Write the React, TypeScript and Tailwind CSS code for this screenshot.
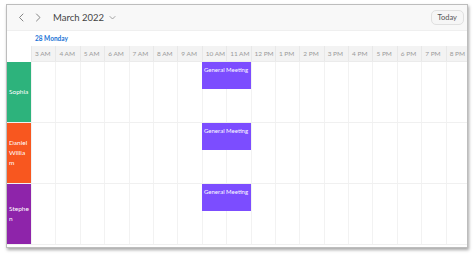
const HOURS = ['3 AM', '4 AM', '5 AM', '6 AM', '7 AM', '8 AM', '9 AM', '10 AM', '11 AM', '12 PM', '1 PM', '2 PM', '3 PM', '4 PM', '5 PM', '6 PM', '7 PM', '8 PM']

const RESOURCES = [
  { name: 'Sophia', color: 'bg-[#2db37c]' },
  { name: 'Daniel William', color: 'bg-[#f8571f]' },
  { name: 'Stephen', color: 'bg-[#8e24aa]' },
]

function Chevron({ dir }: { dir: 'left' | 'right' | 'down' }) {
  const d = dir === 'left' ? 'M5 1L1.5 4.5 5 8' : dir === 'right' ? 'M1.5 1L5 4.5 1.5 8' : 'M1 1.5l2.5 2.5 2.5-2.5'
  return (
    <svg width={7} height={dir === 'down' ? 6 : 9} viewBox={dir === 'down' ? '0 0 7 6' : '0 0 7 9'} fill="none" stroke="currentColor" strokeWidth={0.9}>
      <path d={d} strokeLinecap="round" strokeLinejoin="round" />
    </svg>
  )
}

export default function App() {
  return (
    <div className="w-[474px] h-[254px] bg-white pt-[4px] pl-[6px] overflow-hidden" style={{ fontFamily: 'Lato, "Open Sans", sans-serif' }}>
      <div className="w-[462px] h-[244px] border border-[#bdbdbd] shadow-[1px_2px_3px_rgba(0,0,0,0.35)] bg-white flex flex-col overflow-hidden">

        {/* Toolbar */}
        <div className="h-[26px] shrink-0 bg-[#f8f8f8] flex items-center pl-[6px] pr-[3px] border-b border-[#efefef]">
          <span className="text-[#777] w-[17px] flex justify-center"><Chevron dir="left" /></span>
          <span className="text-[#777] w-[17px] flex justify-center"><Chevron dir="right" /></span>
          <span className="ml-[6px] text-[9.5px] text-[#444] leading-none">March 2022</span>
          <span className="ml-[5px] text-[#999] flex"><Chevron dir="down" /></span>
          <div className="ml-auto h-[15px] px-[6px] rounded-[5px] border border-[#e0e0e0] bg-[#f6f6f6] flex items-center text-[7.5px] text-[#555]">Today</div>
        </div>

        {/* Date + time header */}
        <div className="flex shrink-0">
          <div className="w-[24px] shrink-0 bg-white" />
          <div className="flex-1 overflow-hidden">
            <div className="h-[15px] flex items-center pl-[4px] text-[6.5px] font-bold text-[#1a73d6]">28 Monday</div>
            <div className="h-[16px] bg-[#f3f3f3] flex border-b border-[#ebebeb]">
              {HOURS.map(h => (
                <div key={h} className="w-[24.4px] shrink-0 border-l border-[#e8e8e8] pl-[3px] flex items-center text-[6.5px] text-[#9a9a9a] whitespace-nowrap">{h}</div>
              ))}
            </div>
          </div>
        </div>

        {/* Rows */}
        <div className="flex-1 flex flex-col">
          {RESOURCES.map(r => (
            <div key={r.name} className="flex h-[61px] shrink-0 border-b border-[#f0f0f0]">
              <div className={`w-[24px] shrink-0 ${r.color} flex items-center pl-[2px] pr-[2px] text-[6.5px] leading-[10px] text-white break-all`}>{r.name}</div>
              <div className="flex-1 flex relative overflow-hidden">
                {HOURS.map(h => (
                  <div key={h} className="w-[24.4px] shrink-0 border-l border-[#f2f2f2]" />
                ))}
                <div className="absolute left-[171px] top-0 w-[48.5px] h-[27px] bg-[#7c4dff] text-white text-[6px] pl-[2px] pt-[3px] whitespace-nowrap">General Meeting</div>
              </div>
            </div>
          ))}
        </div>
      </div>
    </div>
  )
}
